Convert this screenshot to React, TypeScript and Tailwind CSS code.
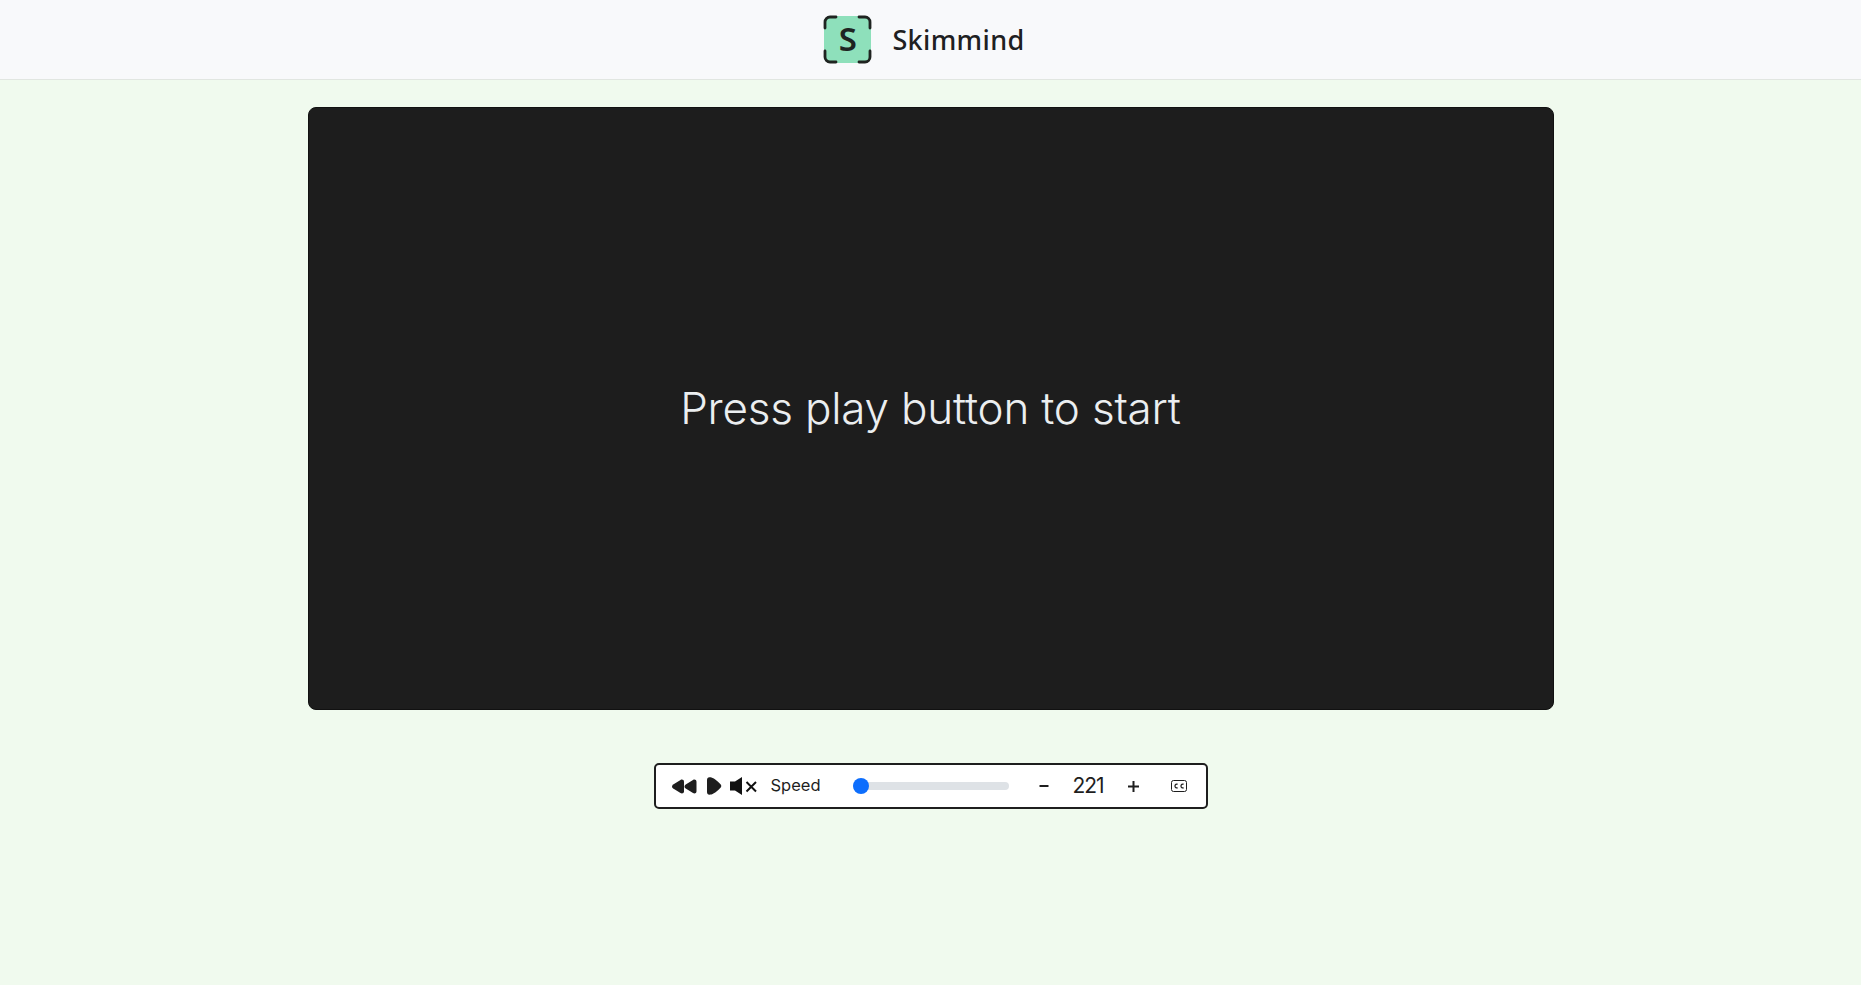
function Logo() {
  return (
    <svg width="49" height="49" viewBox="0 0 49 49" fill="none">
      <rect x="1" y="1" width="47" height="47" rx="6" fill="#8ee0bb" />
      <path
        d="M2 13V7a5 5 0 0 1 5-5h6M36 2h6a5 5 0 0 1 5 5v6M47 36v6a5 5 0 0 1-5 5h-6M13 47H7a5 5 0 0 1-5-5v-6"
        stroke="#1f2421"
        strokeWidth="2.800"
        strokeLinecap="round"
      />
    </svg>
  );
}

function RewindIcon() {
  return (
    <svg width="25" height="15" viewBox="0 0 25 15" fill="#1e1e1e">
      <path d="M1.200 5.400 8.500 1C10 .1 12 .8 12 2.800v9.400c0 2-2 2.700-3.500 1.800L1.200 9.600C-.4 8.600-.4 6.400 1.200 5.400Z" />
      <path d="M13.700 5.400 21 1c1.500-.9 3.500-.2 3.500 1.800v9.400c0 2-2 2.700-3.500 1.800l-7.300-4.400c-1.600-1-1.600-3.200 0-4.200Z" />
    </svg>
  );
}

function PlayIcon() {
  return (
    <svg width="15" height="18" viewBox="0 0 15 18" fill="#1e1e1e">
      <path d="M2.500.300C5 .300 8 1.500 13.500 7.200c1 1 1 2.600 0 3.600C8 16.500 5 17.700 2.500 17.700 .800 17.700 0 16.500 0 15V3C0 1.500.800.300 2.500.300Z" />
    </svg>
  );
}

function MuteIcon() {
  return (
    <svg width="27" height="18" viewBox="0 0 27 18" fill="none">
      <path d="M0 4.500h5L12 0v18L5 13.500H0Z" fill="#111" />
      <path d="M16.500 5 26 14.500M26 5 16.500 14.500" stroke="#111" strokeWidth="2" />
    </svg>
  );
}

function MinusIcon() {
  return (
    <svg width="10" height="10" viewBox="0 0 10 10" fill="none" stroke="#1e1e1e" strokeWidth="2">
      <path d="M0.500 5h9" />
    </svg>
  );
}

function PlusIcon() {
  return (
    <svg width="11" height="11" viewBox="0 0 11 11" fill="none" stroke="#1e1e1e" strokeWidth="2">
      <path d="M0 5.500h11M5.500 0v11" />
    </svg>
  );
}

function CcIcon() {
  return (
    <svg width="16" height="12" viewBox="0 0 16 12" fill="none" stroke="#1e1e1e">
      <rect x="0.500" y="0.500" width="15" height="11" rx="2" />
      <path d="M6.700 4.300a1.900 1.900 0 1 0 0 3.400M12.700 4.300a1.900 1.900 0 1 0 0 3.400" strokeWidth="1.200" />
    </svg>
  );
}

export default function App() {
  return (
    <div className="min-h-[985px] bg-[#f0faee] font-['Inter',sans-serif]">
      {/* Header */}
      <header className="flex h-[80px] items-center justify-center border-b border-[#e1e6e1] bg-[#f8f9fb] pr-[13px]">
        <div className="relative flex h-[49px] w-[49px] items-center justify-center">
          <div className="absolute inset-0">
            <Logo />
          </div>
          <span className="relative -mt-[2px] font-['Noto_Sans',sans-serif] text-[33px] font-semibold leading-none text-[#1e2422]">
            S
          </span>
        </div>
        <span className="ml-[20px] -mt-[1px] font-['Noto_Sans',sans-serif] text-[27px] font-medium leading-none tracking-[0.35px] text-[#1e2022]">
          Skimmind
        </span>
      </header>

      {/* Player */}
      <main className="flex flex-col items-center pt-[27px]">
        <div className="flex h-[603px] w-[1246px] items-center justify-center rounded-[8px] border border-[#111] bg-[#1d1d1d]">
          <p className="-mt-[2px] text-[44px] font-light tracking-[-0.2px] text-[#ebeef0]">Press play button to start</p>
        </div>

        {/* Controls */}
        <div className="mt-[53px] flex h-[46px] w-[554px] items-center rounded-[5px] border-2 border-[#1e1e1e] bg-white pl-[16px]">
          <RewindIcon />
          <div className="ml-[10px]">
            <PlayIcon />
          </div>
          <div className="ml-[8px]">
            <MuteIcon />
          </div>
          <span className="ml-[14px] w-[51px] -mt-[1px] whitespace-nowrap text-[16.500px] text-[#1e1e1e]">Speed</span>
          <div className="relative ml-[31px] h-[8px] w-[156px] rounded-full bg-[#dee2e6]">
            <div className="absolute left-0 top-[-4px] h-4 w-4 rounded-full bg-[#0d6efd]" />
          </div>
          <div className="ml-[30px]">
            <MinusIcon />
          </div>
          <span className="ml-[24px] w-[30px] whitespace-nowrap text-[21px] tracking-[-1px] text-[#1e1e1e]">221</span>
          <div className="ml-[25px]">
            <PlusIcon />
          </div>
          <div className="ml-[32px]">
            <CcIcon />
          </div>
        </div>
      </main>
    </div>
  );
}
